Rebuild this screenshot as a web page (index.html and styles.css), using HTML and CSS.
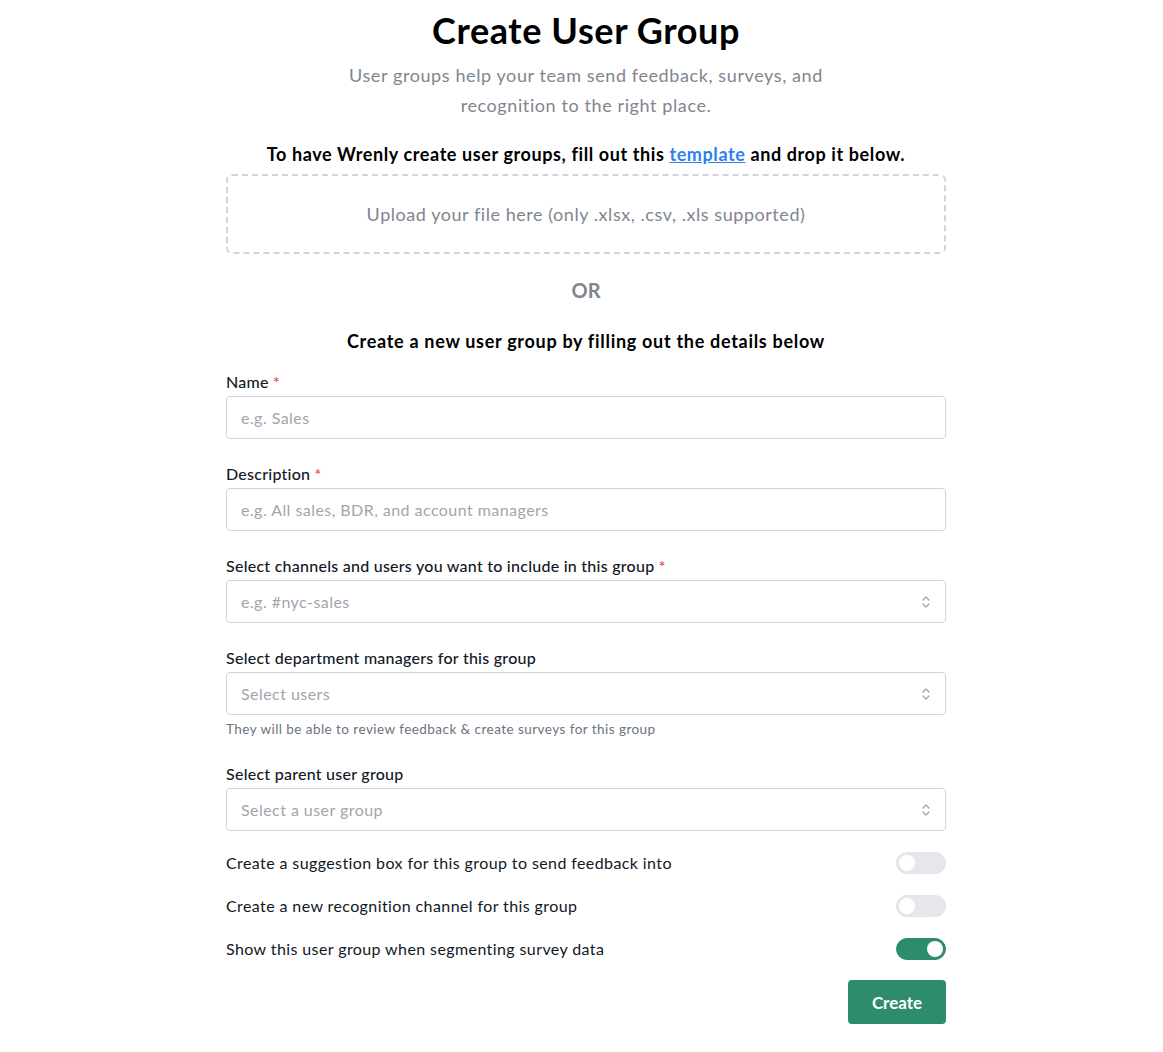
FILE: index.html
```html
<!DOCTYPE html>
<html lang="en">
<head>
  <meta charset="UTF-8" />
  <title>Create User Group</title>
  <link rel="stylesheet" href="styles.css">
</head>
<body>
  <div class="page">
    <h1>Create User Group</h1>
    <p class="sub">User groups help your team send feedback, surveys, and<br>recognition to the right place.</p>

    <p class="lead">To have Wrenly create user groups, fill out this <a href="#">template</a> and drop it below.</p>
    <div class="drop">Upload your file here (only .xlsx, .csv, .xls supported)</div>

    <div class="or">OR</div>

    <p class="lead manual">Create a new user group by filling out the details below</p>

    <form class="form">
      <div class="field">
        <label>Name <span class="req">*</span></label>
        <input type="text" placeholder="e.g. Sales" />
      </div>
      <div class="field">
        <label>Description <span class="req">*</span></label>
        <input type="text" placeholder="e.g. All sales, BDR, and account managers" />
      </div>
      <div class="field">
        <label>Select channels and users you want to include in this group <span class="req">*</span></label>
        <div class="select"><span>e.g. #nyc-sales</span>
          <svg width="10" height="14" viewBox="0 0 10 14"><path d="M2 5l3-3 3 3M2 9l3 3 3-3" fill="none" stroke="#9ca3af" stroke-width="1.3" stroke-linecap="round" stroke-linejoin="round"/></svg>
        </div>
      </div>
      <div class="field with-hint">
        <label>Select department managers for this group</label>
        <div class="select"><span>Select users</span>
          <svg width="10" height="14" viewBox="0 0 10 14"><path d="M2 5l3-3 3 3M2 9l3 3 3-3" fill="none" stroke="#9ca3af" stroke-width="1.3" stroke-linecap="round" stroke-linejoin="round"/></svg>
        </div>
        <div class="hint">They will be able to review feedback &amp; create surveys for this group</div>
      </div>
      <div class="field">
        <label>Select parent user group</label>
        <div class="select"><span>Select a user group</span>
          <svg width="10" height="14" viewBox="0 0 10 14"><path d="M2 5l3-3 3 3M2 9l3 3 3-3" fill="none" stroke="#9ca3af" stroke-width="1.3" stroke-linecap="round" stroke-linejoin="round"/></svg>
        </div>
      </div>

      <div class="toggles">
        <div class="toggle-row"><span>Create a suggestion box for this group to send feedback into</span><span class="switch"></span></div>
        <div class="toggle-row"><span>Create a new recognition channel for this group</span><span class="switch"></span></div>
        <div class="toggle-row"><span>Show this user group when segmenting survey data</span><span class="switch on"></span></div>
      </div>

      <div class="actions"><button type="button">Create</button></div>
    </form>
  </div>
</body>
</html>
```

FILE: styles.css
```css
body { margin: 0; padding: 0 0 0 9px; background: #fff; font-family: 'Lato', sans-serif; color: #111; }
.page { width: 720px; margin: 0 auto; padding-top: 9px; text-align: center; }
h1 { margin: 0; font-size: 36px; line-height: 42px; font-weight: 700; color: #000; letter-spacing: 0.6px; }
.sub { margin: 9px 0 0; font-size: 18px; line-height: 30px; color: #80868f; letter-spacing: 0.6px; }
.lead { margin: 21px 0 0; font-size: 18px; line-height: 26px; font-weight: 700; color: #000; letter-spacing: 0.6px; }
.lead a { color: #2f80ed; text-decoration: underline; }
.drop { margin-top: 7px; height: 80px; box-sizing: border-box; border: 2px dashed #d1d5db; border-radius: 6px; display: flex; align-items: center; justify-content: center; font-size: 18px; color: #80868f; letter-spacing: 0.55px; }
.or { margin-top: 23px; font-size: 20px; line-height: 26px; font-weight: 700; color: #80868f; }
.manual { margin-top: 25px; letter-spacing: 0.7px; }
.form { margin-top: 16px; text-align: left; }
.field { margin-bottom: 24px; }
label { display: block; font-size: 16px; line-height: 24px; font-weight: 500; color: #111827; margin-bottom: 2px; letter-spacing: 0.25px; }
.req { color: #ef4444; }
input, .select { box-sizing: border-box; width: 100%; height: 43px; padding: 0 14px; border: 1px solid #d1d5db; border-radius: 4px; font-family: 'Lato', sans-serif; font-size: 16px; color: #111; background: #fff; letter-spacing: 0.45px; }
input::placeholder { color: #a0a6ae; }
.field + .field { margin-top: -1px; }
.select { display: flex; align-items: center; justify-content: space-between; color: #a0a6ae; }
.hint { margin-top: 5px; font-size: 13.5px; line-height: 18px; color: #6b7280; letter-spacing: 0.45px; }
.with-hint { margin-bottom: 25px; }
.toggles { margin-top: -3px; display: flex; flex-direction: column; gap: 21px; }
.toggle-row { display: flex; justify-content: space-between; align-items: center; font-size: 16px; line-height: 22px; color: #111827; letter-spacing: 0.4px; }
.switch { width: 50px; height: 22px; border-radius: 11px; background: #e5e7eb; position: relative; box-sizing: border-box; border: 1px solid #dfe2e6; }
.switch::after { content: ""; position: absolute; left: 2px; top: 2px; width: 16px; height: 16px; border-radius: 50%; background: #fff; }
.switch.on { background: #2d8c6c; border-color: #2d8c6c; }
.switch.on::after { left: auto; right: 2px; }
.actions { margin-top: 20px; display: flex; justify-content: flex-end; }
button { width: 98px; height: 44px; background: #2d8c6c; color: #fff; border: none; border-radius: 4px; font-family: 'Lato', sans-serif; font-size: 17px; font-weight: 700; cursor: pointer; }
```
